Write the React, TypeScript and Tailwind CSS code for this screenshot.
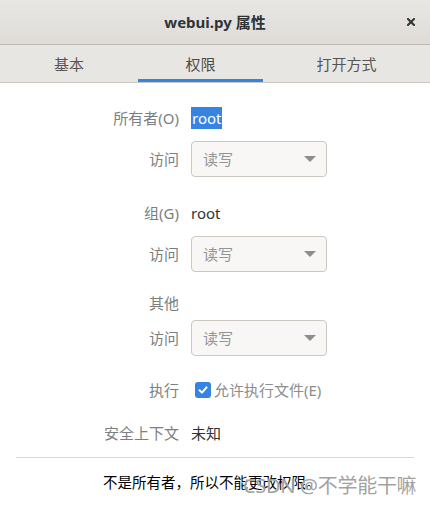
import React from 'react';

const font = { fontFamily: '"Noto Sans", "Noto Sans CJK SC", sans-serif' };

function Dropdown() {
  return (
    <div className="flex h-[36px] w-[136px] items-center justify-between rounded-[4px] border border-[#cdc7c2] bg-[#f8f7f6] pl-[11px] pr-[10px]">
      <span className="text-[15px] text-[#929595]">读写</span>
      <svg width="12" height="6" viewBox="0 0 12 6">
        <path d="M0 0h12L6 6z" fill="#8b8e8f" />
      </svg>
    </div>
  );
}

function Label({ children }: { children: React.ReactNode }) {
  return <div className="w-[179px] shrink-0 text-right text-[15px] text-[#7c7f80]">{children}</div>;
}

export default function App() {
  return (
    <div className="flex h-[507px] w-[430px] flex-col overflow-hidden bg-white" style={font}>
      {/* Title bar */}
      <div className="relative flex h-[45px] shrink-0 items-center justify-center border-b border-[#bfb8b1] bg-gradient-to-b from-[#e8e6e3] to-[#dfdcd8]">
        <span className="text-[15px] font-bold text-[#2e3436]">webui.py 属性</span>
        <svg className="absolute right-[15px] top-[18px]" width="8" height="8" viewBox="0 0 8 8">
          <path d="M1 1L7 7M7 1L1 7" stroke="#2e3436" strokeWidth="2" strokeLinecap="square" />
        </svg>
      </div>

      {/* Tabs */}
      <div className="flex h-[38px] shrink-0 border-b border-[#cdc7c2] bg-[#e8e6e3] text-[15px] text-[#555753]">
        <div className="flex w-[138px] items-center justify-center pt-[2px]">基本</div>
        <div className="flex w-[125px] flex-col items-center justify-end">
          <span className="flex-1 pt-[8px] text-[#4a4c4c]">权限</span>
          <div className="h-[3px] w-full bg-[#3584e4]" />
        </div>
        <div className="flex flex-1 items-center justify-center pt-[2px]">打开方式</div>
      </div>

      {/* Content */}
      <div className="flex flex-col pt-[23px]">
        <div className="flex h-[24px] items-center gap-[12px]">
          <Label>所有者(O)</Label>
          <span className="bg-[#3584e4] px-[1px] text-[15px] leading-[22px] text-white">root</span>
        </div>
        <div className="mt-[11px] flex items-center gap-[12px]">
          <Label>访问</Label>
          <Dropdown />
        </div>

        <div className="mt-[24px] flex h-[24px] items-center gap-[12px]">
          <Label>组(G)</Label>
          <span className="text-[15px] text-[#2e3436]">root</span>
        </div>
        <div className="mt-[11px] flex items-center gap-[12px]">
          <Label>访问</Label>
          <Dropdown />
        </div>

        <div className="mt-[19px] flex h-[24px] items-center gap-[12px]">
          <Label>其他</Label>
        </div>
        <div className="mt-[5px] flex items-center gap-[12px]">
          <Label>访问</Label>
          <Dropdown />
        </div>

        <div className="mt-[22px] flex h-[24px] items-center gap-[12px]">
          <Label>执行</Label>
          <div className="flex items-center gap-[3px] pl-[4px]">
            <div className="flex h-[16px] w-[16px] items-center justify-center rounded-[3px] bg-[#3584e4]">
              <svg width="12" height="12" viewBox="0 0 12 12">
                <path d="M2.5 6.2L5 8.6L9.6 3.4" stroke="#fff" strokeWidth="2" fill="none" strokeLinecap="round" strokeLinejoin="round" />
              </svg>
            </div>
            <span className="text-[15px] text-[#8b8e8f]">允许执行文件(E)</span>
          </div>
        </div>

        <div className="mt-[19px] flex h-[24px] items-center gap-[12px]">
          <Label>安全上下文</Label>
          <span className="text-[15px] text-[#2e3436]">未知</span>
        </div>

        <div className="mx-[16px] mt-[12px] h-px bg-[#dcd9d6]" />

        <div className="relative mt-[14px] pl-[103px] text-[14.5px] text-black">
          不是所有者，所以不能更改权限。
          <span
            className="absolute left-[243px] top-[-1px] text-[20px] tracking-[-0.3px] text-[rgba(130,130,130,0.75)]"
            style={{ textShadow: '0 0 1px #fff' }}
          >
            CSDN @不学能干嘛
          </span>
        </div>
      </div>
    </div>
  );
}
